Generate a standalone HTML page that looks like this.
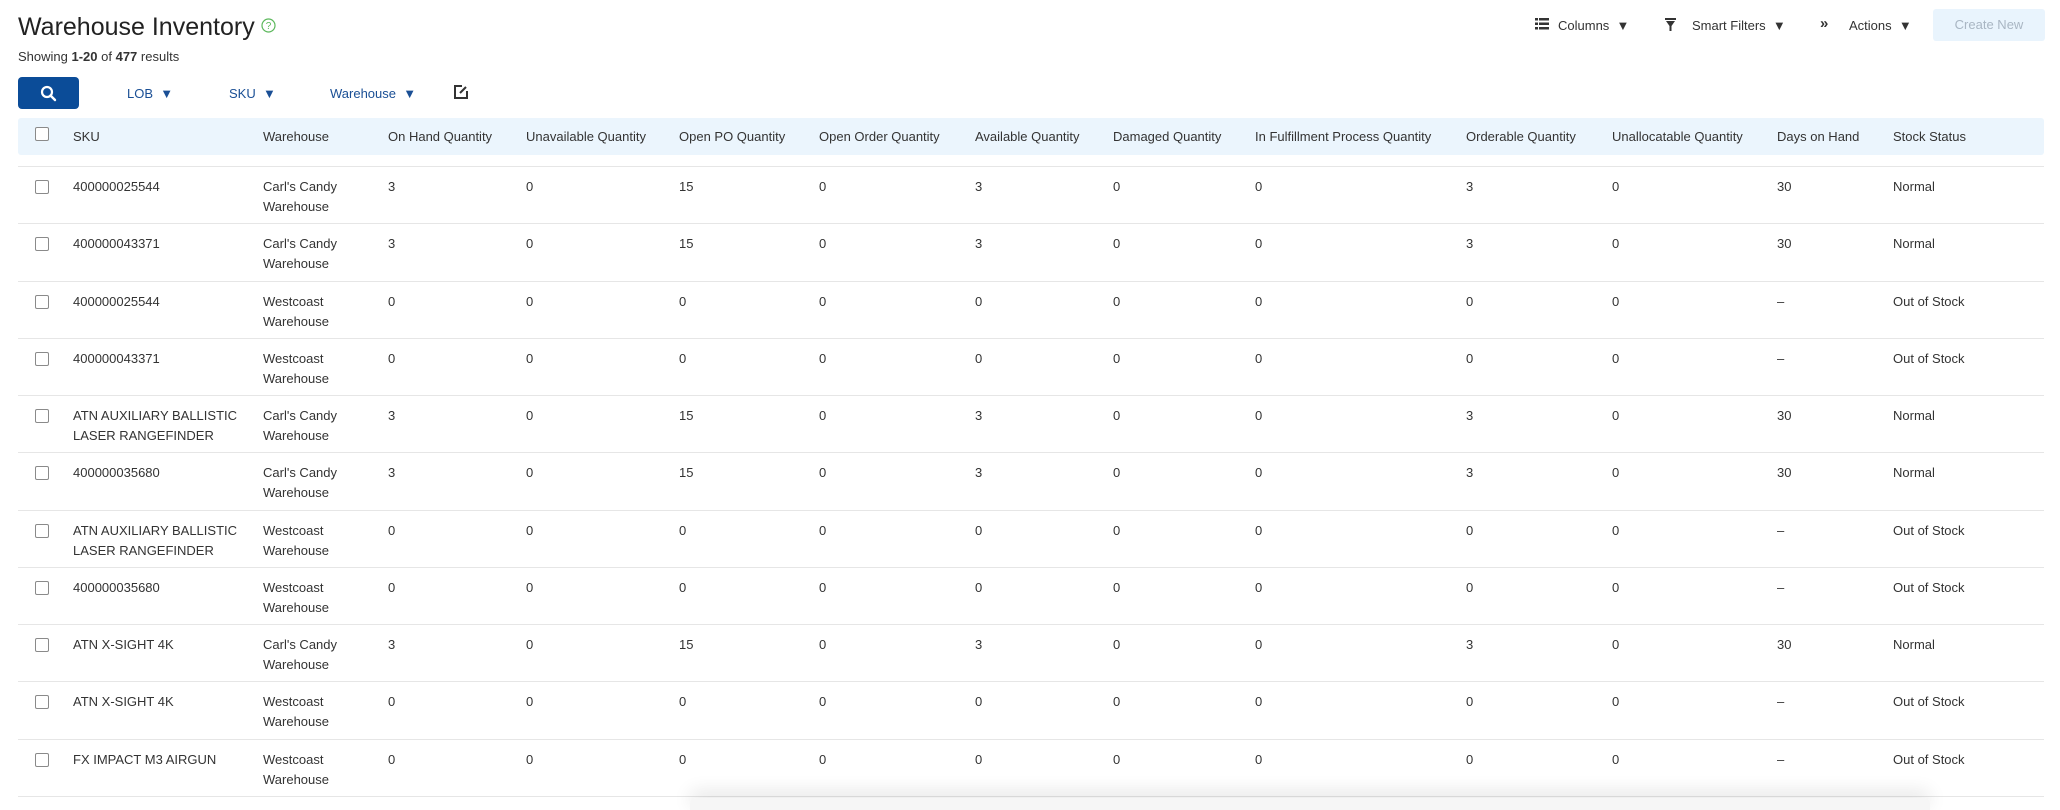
<!DOCTYPE html>
<html style="width:2060px;height:810px;overflow:hidden"><head><meta charset="utf-8"><style>
*{margin:0;padding:0;box-sizing:border-box}
html,body{width:2060px;height:810px;overflow:hidden}
body{background:#fff;font-family:"Liberation Sans",Arial,sans-serif;color:#333;position:relative}
.a{position:absolute;white-space:nowrap}
h1{position:absolute;left:18px;top:13px;font-size:25px;font-weight:normal;color:#222}
.sub{left:18px;top:49px;font-size:13px;color:#333}
.btn{left:18px;top:77px;width:61px;height:32px;background:#0b4c98;border-radius:4px}
.f{top:86px;font-size:13px;color:#1a4f95}
.hdr{left:18px;top:118px;width:2026px;height:37px;background:#ebf5fd;border-radius:3px}
.row{position:absolute;left:18px;width:2026px;height:57px;border-top:1px solid #e6e6e6;font-size:13px;color:#333}
.row span,.h span{position:absolute;top:10px;line-height:20px}
.h{position:absolute;left:18px;top:118px;width:2026px;height:37px;font-size:13px;color:#333}
.h span{top:9px}
.cb{position:absolute;left:17px;width:14px;height:14px;border:1px solid #8a8a8a;border-radius:2px;background:#fff}
.s1{left:55px}.s2{left:245px}.s3{left:370px}.s4{left:508px}.s5{left:661px}.s6{left:801px}.s7{left:957px}.s8{left:1095px}.s9{left:1237px}.s10{left:1448px}.s11{left:1594px}.s12{left:1759px}.s13{left:1875px}
.tr{top:18px;font-size:13px;color:#333}
</style></head><body>
<h1>Warehouse Inventory</h1>
<svg class="a" style="left:261px;top:18px" width="15" height="15" viewBox="0 0 15 15"><circle cx="7.5" cy="7.5" r="6.5" fill="none" stroke="#5cb85c" stroke-width="1.2"/><text x="7.5" y="11" font-size="10" text-anchor="middle" fill="#5cb85c" font-family="Liberation Sans">?</text></svg>
<div class="a sub">Showing <b>1-20</b> of <b>477</b> results</div>
<div class="a btn"><svg style="position:absolute;left:22px;top:8px" width="17" height="17" viewBox="0 0 17 17"><circle cx="7" cy="7" r="5" fill="none" stroke="#fff" stroke-width="2.2"/><path d="M10.5 10.5L15 15" stroke="#fff" stroke-width="2.4" stroke-linecap="round"/></svg></div>
<div class="a f" style="left:127px">LOB &nbsp;▼</div>
<div class="a f" style="left:229px">SKU &nbsp;▼</div>
<div class="a f" style="left:330px">Warehouse &nbsp;▼</div>
<svg class="a" style="left:453px;top:84px" width="16" height="16" viewBox="0 0 16 16"><path d="M9 2H2v12h12V7" fill="none" stroke="#333" stroke-width="2"/><path d="M7 9l6-6" stroke="#333" stroke-width="2"/></svg>

<svg class="a" style="left:1535px;top:18px" width="14" height="12" viewBox="0 0 14 12"><g fill="#333"><rect x="0" y="0" width="3" height="2.5"/><rect x="4" y="0" width="10" height="2.5"/><rect x="0" y="4.5" width="3" height="2.5"/><rect x="4" y="4.5" width="10" height="2.5"/><rect x="0" y="9" width="3" height="2.5"/><rect x="4" y="9" width="10" height="2.5"/></g></svg>
<div class="a tr" style="left:1558px">Columns &nbsp;▼</div>
<svg class="a" style="left:1665px;top:18px" width="11" height="13" viewBox="0 0 11 13"><rect x="0" y="0" width="11" height="2" fill="#333"/><path d="M1 3h9L6.5 8v5h-2V8z" fill="#333"/></svg>
<div class="a tr" style="left:1692px">Smart Filters &nbsp;▼</div>
<div class="a tr" style="left:1820px;font-weight:bold;font-size:15px;top:15px">»</div>
<div class="a tr" style="left:1849px">Actions &nbsp;▼</div>
<div class="a" style="left:1933px;top:9px;width:112px;height:32px;background:#e9f4fd;border-radius:3px;color:#a9b6c3;font-size:13px;text-align:center;line-height:32px">Create New</div>

<div class="a hdr"></div>
<div class="h"><div class="cb" style="top:9px"></div><span class="s1">SKU</span><span class="s2">Warehouse</span><span class="s3">On Hand Quantity</span><span class="s4">Unavailable Quantity</span><span class="s5">Open PO Quantity</span><span class="s6">Open Order Quantity</span><span class="s7">Available Quantity</span><span class="s8">Damaged Quantity</span><span class="s9">In Fulfillment Process Quantity</span><span class="s10">Orderable Quantity</span><span class="s11">Unallocatable Quantity</span><span class="s12">Days on Hand</span><span class="s13">Stock Status</span></div>

<div class="row" style="top:166px"><div class="cb" style="top:13px"></div><span class="s1">400000025544</span><span class="s2">Carl's Candy<br>Warehouse</span><span class="s3">3</span><span class="s4">0</span><span class="s5">15</span><span class="s6">0</span><span class="s7">3</span><span class="s8">0</span><span class="s9">0</span><span class="s10">3</span><span class="s11">0</span><span class="s12">30</span><span class="s13">Normal</span></div>
<div class="row" style="top:223px"><div class="cb" style="top:13px"></div><span class="s1">400000043371</span><span class="s2">Carl's Candy<br>Warehouse</span><span class="s3">3</span><span class="s4">0</span><span class="s5">15</span><span class="s6">0</span><span class="s7">3</span><span class="s8">0</span><span class="s9">0</span><span class="s10">3</span><span class="s11">0</span><span class="s12">30</span><span class="s13">Normal</span></div>
<div class="row" style="top:281px"><div class="cb" style="top:13px"></div><span class="s1">400000025544</span><span class="s2">Westcoast<br>Warehouse</span><span class="s3">0</span><span class="s4">0</span><span class="s5">0</span><span class="s6">0</span><span class="s7">0</span><span class="s8">0</span><span class="s9">0</span><span class="s10">0</span><span class="s11">0</span><span class="s12">–</span><span class="s13">Out of Stock</span></div>
<div class="row" style="top:338px"><div class="cb" style="top:13px"></div><span class="s1">400000043371</span><span class="s2">Westcoast<br>Warehouse</span><span class="s3">0</span><span class="s4">0</span><span class="s5">0</span><span class="s6">0</span><span class="s7">0</span><span class="s8">0</span><span class="s9">0</span><span class="s10">0</span><span class="s11">0</span><span class="s12">–</span><span class="s13">Out of Stock</span></div>
<div class="row" style="top:395px"><div class="cb" style="top:13px"></div><span class="s1">ATN AUXILIARY BALLISTIC<br>LASER RANGEFINDER</span><span class="s2">Carl's Candy<br>Warehouse</span><span class="s3">3</span><span class="s4">0</span><span class="s5">15</span><span class="s6">0</span><span class="s7">3</span><span class="s8">0</span><span class="s9">0</span><span class="s10">3</span><span class="s11">0</span><span class="s12">30</span><span class="s13">Normal</span></div>
<div class="row" style="top:452px"><div class="cb" style="top:13px"></div><span class="s1">400000035680</span><span class="s2">Carl's Candy<br>Warehouse</span><span class="s3">3</span><span class="s4">0</span><span class="s5">15</span><span class="s6">0</span><span class="s7">3</span><span class="s8">0</span><span class="s9">0</span><span class="s10">3</span><span class="s11">0</span><span class="s12">30</span><span class="s13">Normal</span></div>
<div class="row" style="top:510px"><div class="cb" style="top:13px"></div><span class="s1">ATN AUXILIARY BALLISTIC<br>LASER RANGEFINDER</span><span class="s2">Westcoast<br>Warehouse</span><span class="s3">0</span><span class="s4">0</span><span class="s5">0</span><span class="s6">0</span><span class="s7">0</span><span class="s8">0</span><span class="s9">0</span><span class="s10">0</span><span class="s11">0</span><span class="s12">–</span><span class="s13">Out of Stock</span></div>
<div class="row" style="top:567px"><div class="cb" style="top:13px"></div><span class="s1">400000035680</span><span class="s2">Westcoast<br>Warehouse</span><span class="s3">0</span><span class="s4">0</span><span class="s5">0</span><span class="s6">0</span><span class="s7">0</span><span class="s8">0</span><span class="s9">0</span><span class="s10">0</span><span class="s11">0</span><span class="s12">–</span><span class="s13">Out of Stock</span></div>
<div class="row" style="top:624px"><div class="cb" style="top:13px"></div><span class="s1">ATN X-SIGHT 4K</span><span class="s2">Carl's Candy<br>Warehouse</span><span class="s3">3</span><span class="s4">0</span><span class="s5">15</span><span class="s6">0</span><span class="s7">3</span><span class="s8">0</span><span class="s9">0</span><span class="s10">3</span><span class="s11">0</span><span class="s12">30</span><span class="s13">Normal</span></div>
<div class="row" style="top:681px"><div class="cb" style="top:13px"></div><span class="s1">ATN X-SIGHT 4K</span><span class="s2">Westcoast<br>Warehouse</span><span class="s3">0</span><span class="s4">0</span><span class="s5">0</span><span class="s6">0</span><span class="s7">0</span><span class="s8">0</span><span class="s9">0</span><span class="s10">0</span><span class="s11">0</span><span class="s12">–</span><span class="s13">Out of Stock</span></div>
<div class="row" style="top:739px"><div class="cb" style="top:13px"></div><span class="s1">FX IMPACT M3 AIRGUN</span><span class="s2">Westcoast<br>Warehouse</span><span class="s3">0</span><span class="s4">0</span><span class="s5">0</span><span class="s6">0</span><span class="s7">0</span><span class="s8">0</span><span class="s9">0</span><span class="s10">0</span><span class="s11">0</span><span class="s12">–</span><span class="s13">Out of Stock</span></div>
<div class="row" style="top:796px;height:14px;overflow:hidden"><div class="cb" style="top:13px"></div><span class="s1">FX IMPACT M3 AIRGUN</span><span class="s2">Carl's Candy<br>Warehouse</span><span class="s3">3</span><span class="s4">0</span><span class="s5">15</span><span class="s6">0</span><span class="s7">3</span><span class="s8">0</span><span class="s9">0</span><span class="s10">3</span><span class="s11">0</span><span class="s12">30</span><span class="s13">Normal</span></div>
<div class="a" style="left:690px;top:798px;width:1240px;height:12px;background:rgba(245,245,245,0.85);box-shadow:0 -6px 18px rgba(0,0,0,0.12);border-radius:6px 6px 0 0"></div>
</body></html>
